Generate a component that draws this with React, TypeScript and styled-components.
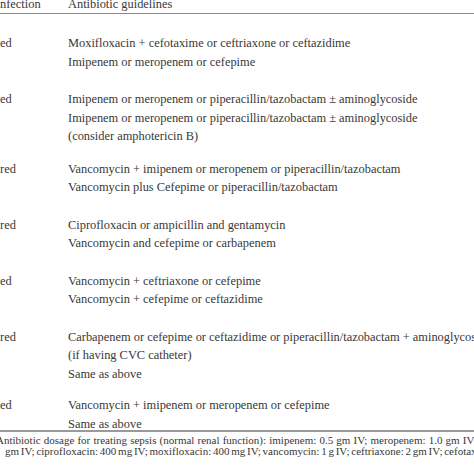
import React from "react";
import styled, { createGlobalStyle } from "styled-components";

const GlobalStyle = createGlobalStyle`
  html, body {
    margin: 0;
    padding: 0;
    background: #fff;
    overflow: hidden;
  }
  body {
    font-family: "Liberation Serif", "DejaVu Serif", serif;
    color: #383838;
  }
`;

const Page = styled.div`
  width: 474px;
  height: 474px;
  overflow: hidden;
`;

const HeadRow = styled.div`
  display: grid;
  grid-template-columns: 68px 1fr;
  height: 13px;
  border-bottom: 1px solid #8a8a8a;
  overflow: hidden;
`;

const HeadCell = styled.div`
  font-size: 12.4px;
  line-height: 18px;
  margin-top: -5px;
  white-space: nowrap;
`;

const Body = styled.div`
  padding-top: 20px;
`;

const Group = styled.div<{ $gap: number }>`
  display: grid;
  grid-template-columns: 68px 1fr;
  padding-bottom: ${(p) => p.$gap}px;
  font-size: 12.4px;
  line-height: 18.5px;
`;

const Label = styled.div`
  white-space: nowrap;
`;

const Lines = styled.div`
  display: flex;
  flex-direction: column;
`;

const Line = styled.div`
  white-space: nowrap;
`;

const Rule = styled.div`
  height: 2px;
  background: #9a9a9a;
  margin-top: -3px;
`;

const Footnote = styled.div`
  padding-top: 3px;
  font-size: 11px;
  line-height: 11px;
  white-space: nowrap;
`;

const FootLine = styled.div<{ $indent: number; $words: number }>`
  margin-left: ${(p) => p.$indent}px;
  word-spacing: ${(p) => p.$words}px;
`;

const groups: { label: string; lines: string[]; gap: number }[] = [
  {
    label: "ed",
    lines: [
      "Moxifloxacin + cefotaxime or ceftriaxone or ceftazidime",
      "Imipenem or meropenem or cefepime",
    ],
    gap: 19,
  },
  {
    label: "ed",
    lines: [
      "Imipenem or meropenem or piperacillin/tazobactam ± aminoglycoside",
      "Imipenem or meropenem or piperacillin/tazobactam ± aminoglycoside",
      "(consider amphotericin B)",
    ],
    gap: 14,
  },
  {
    label: "red",
    lines: [
      "Vancomycin + imipenem or meropenem or piperacillin/tazobactam",
      "Vancomycin plus Cefepime or piperacillin/tazobactam",
    ],
    gap: 19,
  },
  {
    label: "red",
    lines: [
      "Ciprofloxacin or ampicillin and gentamycin",
      "Vancomycin and cefepime or carbapenem",
    ],
    gap: 19,
  },
  {
    label: "ed",
    lines: [
      "Vancomycin + ceftriaxone or cefepime",
      "Vancomycin + cefepime or ceftazidime",
    ],
    gap: 19,
  },
  {
    label: "red",
    lines: [
      "Carbapenem or cefepime or ceftazidime or piperacillin/tazobactam + aminoglycoside",
      "(if having CVC catheter)",
      "Same as above",
    ],
    gap: 13,
  },
  {
    label: "ed",
    lines: ["Vancomycin + imipenem or meropenem or cefepime", "Same as above"],
    gap: 0,
  },
];

export default function App() {
  return (
    <Page>
      <GlobalStyle />
      <HeadRow>
        <HeadCell>nfection</HeadCell>
        <HeadCell>Antibiotic guidelines</HeadCell>
      </HeadRow>
      <Body>
        {groups.map((g, i) => (
          <Group key={i} $gap={g.gap}>
            <Label>{g.label}</Label>
            <Lines>
              {g.lines.map((l, j) => (
                <Line key={j}>{l}</Line>
              ))}
            </Lines>
          </Group>
        ))}
      </Body>
      <Rule />
      <Footnote>
        <FootLine $indent={-4} $words={0.4}>
          Antibiotic dosage for treating sepsis (normal renal function): imipenem: 0.5 gm IV; meropenem: 1.0 gm IV;
        </FootLine>
        <FootLine $indent={5} $words={-1}>
          gm IV; ciprofloxacin: 400 mg IV; moxifloxacin: 400 mg IV; vancomycin: 1 g IV; ceftriaxone: 2 gm IV; cefotax
        </FootLine>
      </Footnote>
    </Page>
  );
}
